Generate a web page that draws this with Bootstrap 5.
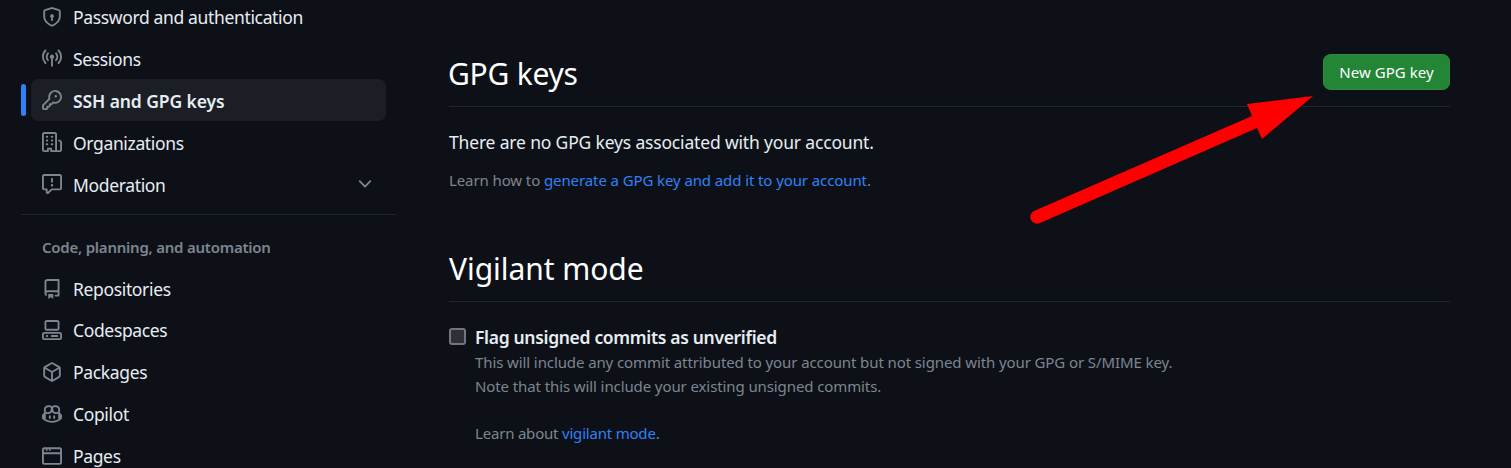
<!doctype html>
<html lang="en" data-bs-theme="dark">
<head>
<meta charset="utf-8">
<title>GPG keys</title>
<link href="https://cdn.jsdelivr.net/npm/bootstrap@5.3.0/dist/css/bootstrap.min.css" rel="stylesheet">
<style>
html,body{height:468px;overflow:hidden}
body{background:#0d1117;color:#e6edf3;font-family:"Noto Sans","Open Sans",sans-serif;font-size:17.5px;letter-spacing:-.35px}
.shell{margin-top:-4px;padding-left:21px;padding-right:61px;position:relative}
.side{width:375px;flex:none;margin-top:-.5px}
.side-list{padding-left:10px;padding-right:10px;margin:0;list-style:none}
.side-item{height:42px;margin-bottom:-.2px;border-radius:7.5px;display:flex;align-items:center;padding:0 11px;position:relative;color:#e6edf3}
.side-item svg.ico{width:20px;height:20px;fill:#7d8590;flex:none;margin-right:11px}
.side-list.upper .side-item{padding-top:2px}
.side-list.upper svg{margin-bottom:2px}
.side-item.on{background:#1b1f25;font-weight:600;color:#e6edf3;letter-spacing:-.1px}
.side-item.on::before{content:"";position:absolute;left:-10px;top:5px;width:5px;height:32px;border-radius:3px;background:#2f81f7}
.chev{width:20px;height:20px;fill:#7d8590;margin-left:auto;margin-right:0}
.side-rule{border-top:1px solid #21262d;margin:9.5px 0 0}
.side-head{font-size:15px;font-weight:600;color:#7d8590;padding:22px 0 0 21px;height:52.6px;line-height:21px;letter-spacing:-.23px}
.main{margin-left:53px;flex:1 1 auto;min-width:0}
.sec-head{border-bottom:1px solid #21262d;height:53px;display:flex;align-items:flex-start;justify-content:space-between}
.sec-title{font-size:30px;font-weight:400;margin:0;line-height:40px;letter-spacing:-.05px}
.sec-title.gpg-title{letter-spacing:-.25px;margin-left:-1px}
.gpg-btn{background:#238636;border:1px solid #2f8d40;color:#fff;font-size:15px;height:36px;width:127px;border-radius:7.5px;padding:0;letter-spacing:.05px;--bs-btn-hover-bg:#238636;--bs-btn-hover-color:#fff;--bs-btn-hover-border-color:#2f8d40}
.sec-wrap-a{padding-top:58px}
.none-msg{margin:0;line-height:24px;padding-top:23px;letter-spacing:-.17px}
.help{font-size:15px;color:#7d8590;letter-spacing:-.1px;line-height:21px}
.help a{color:#2f81f7;text-decoration:none}
.sec-wrap-b{padding-top:58px}
.flag{margin-top:25px;display:flex;gap:9.5px}
.flag-box{appearance:none;width:17px;height:17px;flex:none;background:#2f2f3a;border:2px solid #75757d;border-radius:3px;margin:1px 0 0 -.5px}
.flag-label{font-weight:600;line-height:20px;display:block;letter-spacing:-.32px}
.note{font-size:15px;color:#7d8590;line-height:24px;letter-spacing:-.1px;margin-top:3px}
.help.learn{margin-top:25px;letter-spacing:-.2px}
.arrow{position:absolute;left:0;top:0;width:1511px;height:468px;pointer-events:none}
</style>
</head>
<body>
<div class="shell d-flex">
  <aside class="side">
    <ul class="side-list upper">
      <li class="side-item"><svg class="ico" viewBox="0 0 16 16"><path d="M7.467.133a1.748 1.748 0 0 1 1.066 0l5.25 1.68A1.75 1.75 0 0 1 15 3.48V7c0 1.566-.32 3.182-1.303 4.682-.983 1.498-2.585 2.813-5.032 3.855a1.697 1.697 0 0 1-1.33 0c-2.447-1.042-4.049-2.357-5.032-3.855C1.32 10.182 1 8.566 1 7V3.48a1.75 1.75 0 0 1 1.217-1.667Zm.61 1.429a.25.25 0 0 0-.153 0l-5.25 1.68a.25.25 0 0 0-.174.238V7c0 1.358.275 2.666 1.057 3.86.784 1.194 2.121 2.34 4.366 3.297a.196.196 0 0 0 .154 0c2.245-.956 3.582-2.104 4.366-3.298C13.225 9.666 13.5 8.36 13.5 7V3.48a.251.251 0 0 0-.174-.237l-5.25-1.68ZM8.75 8.582V10.5a.75.75 0 0 1-1.5 0V8.582a1.5 1.5 0 1 1 1.5 0Z"/></svg>Password and authentication</li>
      <li class="side-item"><svg class="ico" viewBox="0 0 16 16"><path d="M8.75 8.582v5.668a.75.75 0 0 1-1.5 0V8.582a1.75 1.75 0 1 1 1.5 0Zm3.983-7.125a.75.75 0 0 1 1.06.026A7.976 7.976 0 0 1 16 7c0 2.139-.84 4.083-2.207 5.517a.75.75 0 1 1-1.086-1.034A6.474 6.474 0 0 0 14.5 7a6.474 6.474 0 0 0-1.793-4.483.75.75 0 0 1 .026-1.06Zm-9.466 0a.75.75 0 0 1 .026 1.06A6.474 6.474 0 0 0 1.5 7a6.47 6.47 0 0 0 1.793 4.483.75.75 0 0 1-1.086 1.034A7.973 7.973 0 0 1 0 7c0-2.139.84-4.083 2.207-5.517a.75.75 0 0 1 1.06-.026Zm8.556 2.321A4.988 4.988 0 0 1 13 7a4.988 4.988 0 0 1-1.177 3.222.75.75 0 1 1-1.146-.967A3.487 3.487 0 0 0 11.5 7c0-.86-.309-1.645-.823-2.255a.75.75 0 0 1 1.146-.967Zm-6.492.958A3.48 3.48 0 0 0 4.5 7a3.48 3.48 0 0 0 .823 2.255.75.75 0 0 1-1.146.967A4.981 4.981 0 0 1 3 7a4.98 4.98 0 0 1 1.188-3.236.75.75 0 1 1 1.143.97Z"/></svg>Sessions</li>
      <li class="side-item on"><svg class="ico" viewBox="0 0 16 16"><path d="M10.5 0a5.499 5.499 0 1 1-1.288 10.848l-.932.932a.749.749 0 0 1-.53.22H7v.75a.749.749 0 0 1-.22.53l-.5.5a.749.749 0 0 1-.53.22H5v.75a.749.749 0 0 1-.22.53l-.5.5a.749.749 0 0 1-.53.22h-2A1.75 1.75 0 0 1 0 14.25v-2c0-.199.079-.389.22-.53l4.932-4.932A5.5 5.5 0 0 1 10.5 0Zm-4 5.5c-.001.431.069.86.205 1.269a.75.75 0 0 1-.181.768L1.5 12.56v1.69c0 .138.112.25.25.25h1.69l.06-.06v-1.19a.75.75 0 0 1 .75-.75h1.19l.06-.06v-1.19a.75.75 0 0 1 .75-.75h1.19l1.023-1.025a.75.75 0 0 1 .768-.18A4 4 0 1 0 6.5 5.5ZM11 6a1 1 0 1 1 0-2 1 1 0 0 1 0 2Z"/></svg>SSH and GPG keys</li>
      <li class="side-item"><svg class="ico" viewBox="0 0 16 16"><path d="M1.75 16A1.75 1.75 0 0 1 0 14.25V1.75C0 .784.784 0 1.75 0h8.5C11.216 0 12 .784 12 1.75v12.5c0 .085-.006.168-.018.25h2.268a.25.25 0 0 0 .25-.25V8.285a.25.25 0 0 0-.111-.208l-1.055-.703a.749.749 0 1 1 .832-1.248l1.055.703c.487.325.779.871.779 1.456v5.965A1.75 1.75 0 0 1 14.25 16h-3.5a.766.766 0 0 1-.197-.026c-.099.017-.2.026-.303.026h-3a.75.75 0 0 1-.75-.75V14h-1v1.25a.75.75 0 0 1-.75.75Zm-.25-1.75c0 .138.112.25.25.25H4v-1.25a.75.75 0 0 1 .75-.75h2.5a.75.75 0 0 1 .75.75v1.25h2.25a.25.25 0 0 0 .25-.25V1.75a.25.25 0 0 0-.25-.25h-8.5a.25.25 0 0 0-.25.25ZM3.75 6h.5a.75.75 0 0 1 0 1.5h-.5a.75.75 0 0 1 0-1.5ZM3 3.75A.75.75 0 0 1 3.75 3h.5a.75.75 0 0 1 0 1.5h-.5A.75.75 0 0 1 3 3.75Zm4 3A.75.75 0 0 1 7.75 6h.5a.75.75 0 0 1 0 1.5h-.5A.75.75 0 0 1 7 6.75ZM7.75 3h.5a.75.75 0 0 1 0 1.5h-.5a.75.75 0 0 1 0-1.5ZM3 9.75A.75.75 0 0 1 3.75 9h.5a.75.75 0 0 1 0 1.5h-.5A.75.75 0 0 1 3 9.75ZM7.75 9h.5a.75.75 0 0 1 0 1.5h-.5a.75.75 0 0 1 0-1.5Z"/></svg>Organizations</li>
      <li class="side-item"><svg class="ico" viewBox="0 0 16 16"><path d="M0 1.75C0 .784.784 0 1.75 0h12.5C15.216 0 16 .784 16 1.75v9.5A1.75 1.75 0 0 1 14.25 13H8.06l-2.573 2.573A1.458 1.458 0 0 1 3 14.543V13H1.75A1.75 1.75 0 0 1 0 11.25Zm1.75-.25a.25.25 0 0 0-.25.25v9.5c0 .138.112.25.25.25h2a.75.75 0 0 1 .75.75v2.19l2.72-2.72a.749.749 0 0 1 .53-.22h6.5a.25.25 0 0 0 .25-.25v-9.5a.25.25 0 0 0-.25-.25Zm7 2.25v2.5a.75.75 0 0 1-1.5 0v-2.5a.75.75 0 0 1 1.5 0ZM9 9a1 1 0 1 1-2 0 1 1 0 0 1 2 0Z"/></svg>Moderation<svg class="chev" viewBox="0 0 16 16"><path d="M12.78 5.22a.749.749 0 0 1 0 1.06l-4.25 4.25a.749.749 0 0 1-1.06 0L3.22 6.28a.749.749 0 1 1 1.06-1.06L8 8.939l3.72-3.72a.749.749 0 0 1 1.06 0Z"/></svg></li>
    </ul>
    <div class="side-rule"></div>
    <div class="side-head">Code, planning, and automation</div>
    <ul class="side-list">
      <li class="side-item"><svg class="ico" viewBox="0 0 16 16"><path d="M2 2.5A2.5 2.5 0 0 1 4.5 0h8.75a.75.75 0 0 1 .75.75v12.5a.75.75 0 0 1-.75.75h-2.5a.75.75 0 0 1 0-1.5h1.75v-2h-8a1 1 0 0 0-.714 1.7.75.75 0 1 1-1.072 1.05A2.495 2.495 0 0 1 2 11.5Zm10.5-1h-8a1 1 0 0 0-1 1v6.708A2.486 2.486 0 0 1 4.5 9h8ZM5 12.25a.25.25 0 0 1 .25-.25h3.5a.25.25 0 0 1 .25.25v3.25a.25.25 0 0 1-.4.2l-1.45-1.087a.249.249 0 0 0-.3 0L5.4 15.7a.25.25 0 0 1-.4-.2Z"/></svg>Repositories</li>
      <li class="side-item"><svg class="ico" viewBox="0 0 16 16"><path d="M0 11.25c0-.966.784-1.75 1.75-1.75h12.5c.966 0 1.75.784 1.75 1.75v3A1.75 1.75 0 0 1 14.25 16H1.75A1.75 1.75 0 0 1 0 14.25Zm2-9.5C2 .784 2.784 0 3.75 0h8.5C13.216 0 14 .784 14 1.75v5a1.75 1.75 0 0 1-1.75 1.75h-8.5A1.75 1.75 0 0 1 2 6.75Zm1.75-.25a.25.25 0 0 0-.25.25v5c0 .138.112.25.25.25h8.5a.25.25 0 0 0 .25-.25v-5a.25.25 0 0 0-.25-.25Zm-2 9.5a.25.25 0 0 0-.25.25v3c0 .138.112.25.25.25h12.5a.25.25 0 0 0 .25-.25v-3a.25.25 0 0 0-.25-.25Z"/><path d="M7 12.75a.75.75 0 0 1 .75-.75h4.5a.75.75 0 0 1 0 1.5h-4.5a.75.75 0 0 1-.75-.75Zm-4 0a.75.75 0 0 1 .75-.75h.5a.75.75 0 0 1 0 1.5h-.5a.75.75 0 0 1-.75-.75Z"/></svg>Codespaces</li>
      <li class="side-item"><svg class="ico" viewBox="0 0 16 16"><path d="m8.878.392 5.25 3.045c.54.314.872.89.872 1.514v6.098a1.75 1.75 0 0 1-.872 1.514l-5.25 3.045a1.75 1.75 0 0 1-1.756 0l-5.25-3.045A1.75 1.75 0 0 1 1 11.049V4.951c0-.624.332-1.201.872-1.514L7.122.392a1.75 1.75 0 0 1 1.756 0ZM7.875 1.69l-4.63 2.685L8 7.133l4.755-2.758-4.63-2.685a.248.248 0 0 0-.25 0ZM2.5 5.677v5.372c0 .09.047.171.125.216l4.625 2.683V8.432Zm6.25 8.271 4.625-2.683a.25.25 0 0 0 .125-.216V5.677L8.75 8.432Z"/></svg>Packages</li>
      <li class="side-item"><svg class="ico" viewBox="0 0 16 16"><path d="M7.998 15.035c-4.562 0-7.873-2.914-7.998-3.749V9.338c.085-.628.677-1.686 1.588-2.065.013-.07.024-.143.036-.218.029-.183.06-.384.126-.612-.201-.508-.254-1.084-.254-1.656 0-.87.128-1.769.693-2.484.579-.733 1.494-1.124 2.724-1.261 1.206-.134 2.262.034 2.944.765.05.053.096.108.139.165.044-.057.094-.112.143-.165.682-.731 1.738-.899 2.944-.765 1.23.137 2.145.528 2.724 1.261.566.715.693 1.614.693 2.484 0 .572-.053 1.148-.254 1.656.066.228.098.429.126.612.012.076.024.148.037.218.924.385 1.522 1.471 1.591 2.095v1.872c0 .766-3.351 3.795-8.002 3.795Zm0-1.485c2.28 0 4.584-1.11 5.002-1.433V7.862l-.023-.116c-.49.21-1.075.291-1.727.291-1.146 0-2.059-.327-2.71-.991A3.222 3.222 0 0 1 8 6.303a3.24 3.24 0 0 1-.544.743c-.65.664-1.563.991-2.71.991-.652 0-1.236-.081-1.727-.291l-.023.116v4.255c.419.323 2.722 1.433 5.002 1.433ZM6.762 2.83c-.193-.206-.637-.413-1.682-.297-1.019.113-1.479.404-1.713.7-.247.312-.369.789-.369 1.554 0 .793.129 1.171.308 1.371.162.181.519.379 1.442.379.853 0 1.339-.235 1.638-.54.315-.322.527-.827.617-1.553.117-.935-.037-1.395-.241-1.614Zm4.155-.297c-1.044-.116-1.488.091-1.681.297-.204.219-.359.679-.242 1.614.091.726.303 1.231.618 1.553.299.305.784.54 1.638.54.922 0 1.28-.198 1.442-.379.179-.2.308-.578.308-1.371 0-.765-.123-1.242-.37-1.554-.233-.296-.693-.587-1.713-.7Z"/><path d="M6.25 9.037a.75.75 0 0 1 .75.75v1.501a.75.75 0 0 1-1.5 0V9.787a.75.75 0 0 1 .75-.75Zm4.25.75v1.501a.75.75 0 0 1-1.5 0V9.787a.75.75 0 0 1 1.5 0Z"/></svg>Copilot</li>
      <li class="side-item"><svg class="ico" viewBox="0 0 16 16"><path d="M0 2.75C0 1.784.784 1 1.75 1h12.5c.966 0 1.75.784 1.75 1.75v10.5A1.75 1.75 0 0 1 14.25 15H1.75A1.75 1.75 0 0 1 0 13.25ZM14.5 6.5h-13v6.75c0 .138.112.25.25.25h12.5a.25.25 0 0 0 .25-.25Zm0-3.75a.25.25 0 0 0-.25-.25H1.75a.25.25 0 0 0-.25.25V5h13ZM3 3.25a.75.75 0 1 1 1.5 0 .75.75 0 0 1-1.5 0Zm2.5 0a.75.75 0 1 1 1.5 0 .75.75 0 0 1-1.5 0Z"/></svg>Pages</li>
    </ul>
  </aside>
  <main class="main">
    <div class="sec-wrap-a">
      <div class="sec-head">
        <h2 class="sec-title gpg-title">GPG keys</h2>
        <button type="button" class="btn gpg-btn">New GPG key</button>
      </div>
      <p class="none-msg">There are no GPG keys associated with your account.</p>
      <div class="help mt-3">Learn how to <a href="#">generate a GPG key and add it to your account</a>.</div>
    </div>
    <div class="sec-wrap-b">
      <div class="sec-head">
        <h2 class="sec-title">Vigilant mode</h2>
      </div>
      <div class="flag">
        <input class="flag-box" type="checkbox" id="flag" aria-label="Flag unsigned commits as unverified">
        <div>
          <label class="flag-label" for="flag">Flag unsigned commits as unverified</label>
          <div class="note">This will include any commit attributed to your account but not signed with your GPG or S/MIME key.<br>Note that this will include your existing unsigned commits.</div>
          <div class="help learn">Learn about <a href="#">vigilant mode</a>.</div>
        </div>
      </div>
    </div>
  </main>
</div>
<svg class="arrow" viewBox="0 0 1511 468"><path fill="#f00" d="M1313 96 1247 104 1252 116 1034 211A6.7 6.7 0 0 0 1040 223L1257 128 1262 139Z"/></svg>
</body>
</html>
